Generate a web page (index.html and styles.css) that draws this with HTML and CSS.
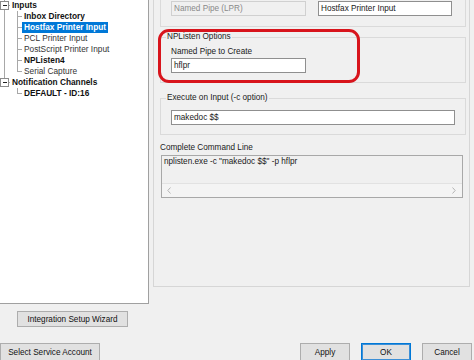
FILE: index.html
```html
<!DOCTYPE html>
<html lang="en">
<head>
    <meta charset="UTF-8">
    <title>NPListen Input Settings</title>
    <link rel="stylesheet" href="styles.css">
</head>
<body>
    <div class="main">
        <div class="tree">
            <div class="node">
                <svg class="gutter" width="10" height="11"><path d="M4.5 0V1.5M4.5 9.5V11M8.5 5.5H10" /><rect x="0.5" y="1.5" width="8" height="8" class="tbox" /><path d="M2.5 5.5H6.5" class="minus" /></svg>
                <span class="label bold">Inputs</span>
            </div>
            <div class="node">
                <svg class="gutter" width="22" height="11"><path d="M4.5 0V11M17.5 0V11M17.5 5.5H22" /></svg>
                <span class="label bold">Inbox Directory</span>
            </div>
            <div class="node">
                <svg class="gutter" width="22" height="11"><path d="M4.5 0V11M17.5 0V11M17.5 5.5H22" /></svg>
                <span class="label bold selected">Hostfax Printer Input</span>
            </div>
            <div class="node">
                <svg class="gutter" width="22" height="11"><path d="M4.5 0V11M17.5 0V11M17.5 5.5H22" /></svg>
                <span class="label">PCL Printer Input</span>
            </div>
            <div class="node">
                <svg class="gutter" width="22" height="11"><path d="M4.5 0V11M17.5 0V11M17.5 5.5H22" /></svg>
                <span class="label">PostScript Printer Input</span>
            </div>
            <div class="node">
                <svg class="gutter" width="22" height="11"><path d="M4.5 0V11M17.5 0V11M17.5 5.5H22" /></svg>
                <span class="label bold">NPListen4</span>
            </div>
            <div class="node">
                <svg class="gutter" width="22" height="11"><path d="M4.5 0V11M17.5 0V5.5M17.5 5.5H22" /></svg>
                <span class="label">Serial Capture</span>
            </div>
            <div class="node">
                <svg class="gutter" width="10" height="11"><path d="M4.5 0V1.5M8.5 5.5H10" /><rect x="0.5" y="1.5" width="8" height="8" class="tbox" /><path d="M2.5 5.5H6.5" class="minus" /></svg>
                <span class="label bold">Notification Channels</span>
            </div>
            <div class="node">
                <svg class="gutter" width="22" height="11"><path d="M17.5 0V5.5M17.5 5.5H22" /></svg>
                <span class="label bold">DEFAULT - ID:16</span>
            </div>
        </div>

        <div class="side">
            <div class="frame">
                <div class="group first">
                    <div class="box disabled">Named Pipe (LPR)</div>
                    <div class="box">Hostfax Printer Input</div>
                </div>

                <div class="mark-wrap">
                    <fieldset class="group">
                        <legend>NPListen Options</legend>
                        <div class="field-label">Named Pipe to Create</div>
                        <div class="box">hflpr</div>
                    </fieldset>
                    <div class="highlight"></div>
                </div>

                <fieldset class="group exec">
                    <legend>Execute on Input (-c option)</legend>
                    <div class="box wide">makedoc $$</div>
                </fieldset>

                <div class="cmd-label">Complete Command Line</div>
                <div class="cmd">
                    <div class="cmd-text">nplisten.exe -c "makedoc $$" -p hflpr</div>
                    <div class="hscroll">
                        <svg width="4" height="7"><path d="M3.5 0.5L0.8 3.5L3.5 6.5" /></svg>
                        <svg width="4" height="7"><path d="M0.5 0.5L3.2 3.5L0.5 6.5" /></svg>
                    </div>
                </div>
            </div>
        </div>
    </div>

    <div class="wizard-row">
        <button class="btn wizard">Integration Setup Wizard</button>
    </div>

    <div class="footer">
        <button class="btn account">Select Service Account</button>
        <div class="actions">
            <button class="btn">Apply</button>
            <button class="btn default">OK</button>
            <button class="btn">Cancel</button>
        </div>
    </div>
</body>
</html>
```

FILE: styles.css
```css
body {
    margin: 0;
    width: 474px;
    height: 360px;
    overflow: hidden;
    background: #f0f0f0;
    font-family: "Liberation Sans", Arial, sans-serif;
    font-size: 8.2px;
    color: #1a1a1a;
}
.main {
    display: flex;
    height: 304px;
}

/* tree view */
.tree {
    width: 148px;
    height: 303px;
    flex: none;
    background: #fff;
    border-right: 1px solid #a0a0a0;
    border-bottom: 1px solid #a0a0a0;
    font-size: 8.3px;
}
.node {
    display: flex;
    height: 11px;
}
.gutter {
    display: block;
    flex: none;
    fill: none;
    stroke: #a8a8a8;
    stroke-width: 1;
    shape-rendering: crispEdges;
}
.gutter .tbox {
    fill: #fff;
    stroke: #8c8c8c;
}
.gutter .minus {
    stroke: #222;
}
.label {
    padding: 0 2px;
    line-height: 11px;
    white-space: nowrap;
    color: #333;
}
.label.bold {
    font-weight: bold;
    color: #111;
}
.label.selected {
    background: #0078d7;
    color: #fff;
}

/* right panel */
.side {
    flex: 1;
    padding: 0 5px 0 4px;
}
.frame {
    height: 286px;
    border: 1px solid #d6d6d6;
    border-top: none;
    padding: 0 3px 0 6px;
    overflow: hidden;
}
.group {
    margin: 0;
    min-width: 0;
    border: 1px solid #dadada;
    padding: 5px 10px 9px 10px;
}
.group legend {
    padding: 0 1px;
    margin-left: -5px;
    line-height: 10px;
}
.group.first {
    display: flex;
    gap: 12px;
    margin-top: -10px;
    padding: 10px 12px 10px 10px;
}
.box {
    box-sizing: border-box;
    width: 135px;
    height: 15px;
    border: 1px solid #8f8f8f;
    background: #fff;
    padding: 0 2px;
    line-height: 13px;
    white-space: nowrap;
}
.first .box + .box {
    width: 134px;
}
.box.disabled {
    background: #f0f0f0;
    border-color: #d0d0d0;
    color: #8a8a8a;
}
.box.wide {
    width: 284px;
}
.field-label {
    line-height: 10px;
    margin-bottom: 1px;
}
.mark-wrap {
    position: relative;
    margin-top: 5px;
}
.highlight {
    position: absolute;
    left: -2px;
    top: -3px;
    width: 202px;
    height: 54px;
    box-sizing: border-box;
    border: 3px solid #d8141c;
    border-radius: 11px;
}
.group.exec {
    margin-top: 10px;
    padding-top: 7px;
}
.cmd-label {
    margin-top: 8px;
    line-height: 10px;
}
.cmd {
    display: flex;
    flex-direction: column;
    box-sizing: border-box;
    width: 302px;
    height: 43px;
    margin: 2px 0 0 1px;
    border: 1px solid #a8a8a8;
    background: #f0f0f0;
}
.cmd-text {
    padding: 1px 2px;
    line-height: 10px;
    white-space: nowrap;
}
.hscroll {
    display: flex;
    justify-content: space-between;
    align-items: center;
    margin-top: auto;
    height: 13px;
    padding: 0 6px 0 5px;
    border-top: 1px solid #e2e2e2;
    background: #f4f4f4;
}
.hscroll svg {
    display: block;
    fill: none;
    stroke: #b4b4b4;
    stroke-width: 1;
}

/* buttons */
.btn {
    box-sizing: border-box;
    height: 17px;
    padding: 0;
    font: inherit;
    color: #111;
    background: #e1e1e1;
    border: 1px solid #adadad;
}
.wizard-row {
    margin-top: 7px;
    padding-left: 17px;
}
.wizard {
    width: 111px;
    height: 16px;
}
.footer {
    display: flex;
    justify-content: space-between;
    margin-top: 16px;
    padding-right: 2px;
}
.account {
    width: 100px;
    height: 18px;
}
.actions {
    display: flex;
    gap: 11px;
}
.actions .btn {
    width: 50px;
    height: 18px;
}
.btn.default {
    border-color: #0078d7;
    box-shadow: inset 0 0 0 1px #3c8fd6;
}
```
